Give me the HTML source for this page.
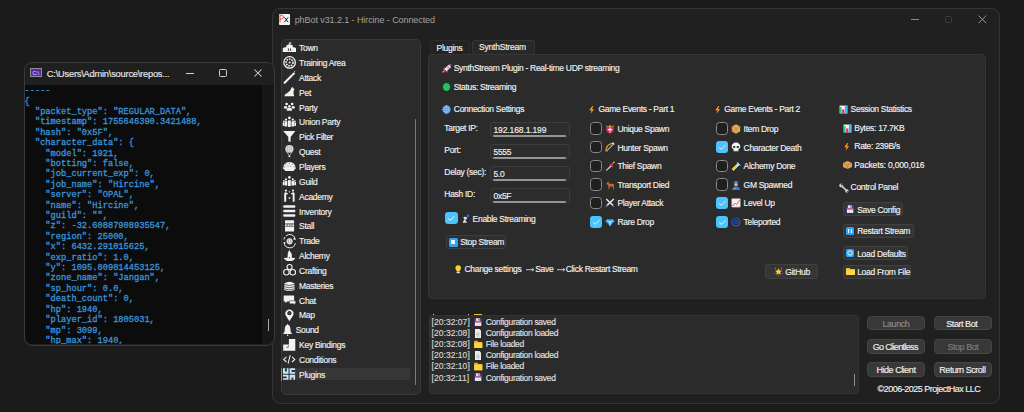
<!DOCTYPE html>
<html><head><meta charset="utf-8"><style>
*{margin:0;padding:0;box-sizing:border-box}
html,body{width:1024px;height:412px;overflow:hidden;background:#1b1b1b;font-family:"Liberation Sans",sans-serif;color:#e6e6e6}
.a{position:absolute}
.t{position:absolute;white-space:pre;color:#f2f2f2;-webkit-text-stroke:0.15px currentColor}
pre{font-family:"Liberation Mono",monospace}
</style></head><body>
<div class="a" style="left:272px;top:8px;width:728px;height:395.5px;background:#202020;border:1px solid #353535;border-radius:8px"></div>
<div class="a" style="left:279px;top:14px;width:11px;height:11px;background:#f4f4f4;border-radius:1px"></div>
<svg class="a" style="left:279px;top:14px" width="11" height="11" viewBox="0 0 11 11"><path d="M1 8.5V1.2H2.6Q4.4 1.2 4.4 3.1Q4.4 5 2.6 5H1" fill="none" stroke="#e8403a" stroke-width="0.9"/><path d="M5.4 3.3L9.2 8.2M9.2 3.3L5.4 8.2" stroke="#1a1a1a" stroke-width="1"/></svg>
<div class="t" style="left:294.70px;top:14.18px;font-size:9px;letter-spacing:-0.08px;line-height:12px;color:#a2a2a2;-webkit-text-stroke:0">phBot v31.2.1 - Hircine - Connected</div>
<div class="a" style="left:910.7px;top:18.6px;width:8.4px;height:1px;background:#8c8c8c"></div>
<div class="a" style="left:944.6px;top:15.7px;width:7.5px;height:7px;border:1px solid #3c3c3c;border-radius:1.5px"></div>
<svg class="a" style="left:978px;top:15px" width="9" height="9" viewBox="0 0 9 9"><path d="M0.6 0.6L8.2 8.2M8.2 0.6L0.6 8.2" stroke="#a6a6a6" stroke-width="0.9"/></svg>
<div class="a" style="left:280.5px;top:39px;width:140.5px;height:356px;background:#2b2b2b;border:1px solid #393939;border-radius:5px"></div>
<div class="a" style="left:415px;top:119px;width:1px;height:266px;background:#7c7c7c;border-radius:1px"></div>
<div class="a" style="left:282px;top:368.2px;width:128px;height:11.8px;background:#373737;border-radius:3px"></div>
<div class="a" style="left:281.2px;top:368px;width:1.2px;height:12.7px;background:#3d9be0"></div>
<svg class="a" style="left:0;top:0" width="1024" height="412" viewBox="0 0 1024 412">
<path d="M282.8 52V48.3L284.6 47.3H286.3V45.6L289.5 43.9L292.8 45.6V47.3H294.4L296 48.3V52Z" fill="#f2f2f2"/>
<path d="M289.3 44.3V42.5L291.3 43.1L289.3 43.7" fill="#f2f2f2" stroke="#f2f2f2" stroke-width="0.5"/>
<path d="M288.4 48.3V51M290.6 48.3V51" stroke="#2b2b2b" stroke-width="0.9"/>
<circle cx="289.6" cy="62.45" r="5.75" fill="none" stroke="#f2f2f2" stroke-width="1.3"/>
<circle cx="289.6" cy="62.45" r="3.4" fill="none" stroke="#f2f2f2" stroke-width="1.6" stroke-dasharray="1.6 0.9"/>
<circle cx="289.6" cy="62.45" r="1" fill="#f2f2f2"/>
<path d="M284.6 82.8L293.9 73.5" stroke="#f2f2f2" stroke-width="2" stroke-linecap="round"/>
<circle cx="294.6" cy="71.7" r="0.6" fill="#bbb"/>
<circle cx="292.2" cy="75.3" r="0.45" fill="#2b2b2b"/>
<path d="M284.3 96.3L285.2 94.3L287.6 92.8L290.2 90.4L291.4 87.8L292.6 86.9L293.3 88.2L294.5 89.2L293.8 90.4L293.4 93L294.2 96.3Z" fill="#f2f2f2"/>
<circle cx="286.6" cy="104" r="1.35" fill="#f2f2f2"/><circle cx="292.1" cy="104" r="1.35" fill="#f2f2f2"/>
<ellipse cx="285.6" cy="107.4" rx="1.7" ry="1.4" fill="#f2f2f2"/><ellipse cx="293.2" cy="107.4" rx="1.7" ry="1.4" fill="#f2f2f2"/>
<circle cx="289.35" cy="106.3" r="1.2" fill="#f2f2f2"/>
<path d="M286.6 110.8Q286.8 107.6 289.35 107.6Q291.9 107.6 292.1 110.8Z" fill="#f2f2f2"/>
<circle cx="289.4" cy="117.9" r="1.35" fill="#f2f2f2"/>
<circle cx="286" cy="119.7" r="1.1" fill="#f2f2f2"/><circle cx="292.8" cy="119.7" r="1.1" fill="#f2f2f2"/>
<circle cx="283.9" cy="121.3" r="0.9" fill="#f2f2f2"/><circle cx="294.9" cy="121.3" r="0.9" fill="#f2f2f2"/>
<path d="M288 127V120.4H290.8V127ZM284.8 126.5V121.2H287.3V126.5ZM291.5 126.5V121.2H294V126.5ZM282.8 126V122.5H284.5V126ZM294.3 126V122.5H296V126Z" fill="#f2f2f2"/>
<path d="M283.2 131.1H295.3L290.7 137.1L290.5 142L288.3 141.2V137.1Z" fill="#f2f2f2"/>
<ellipse cx="289.4" cy="148.9" rx="4.1" ry="3.8" fill="#dcdcdc"/>
<path d="M289.4 145.2V152.5M287.6 145.6Q286.8 149 287.7 152.3M291.2 145.6Q292 149 291.1 152.3" stroke="#9a9a9a" stroke-width="0.5" fill="none"/>
<path d="M286.6 151.7L289 155.3M292.2 151.7L289.8 155.3" stroke="#f2f2f2" stroke-width="0.6"/>
<circle cx="289.4" cy="156.3" r="1" fill="#f2f2f2"/>
<path d="M283.2 168.3Q283.2 162 289.4 161.9Q295.6 162 295.6 168.3L293.5 170.9H285.3Z" fill="#f2f2f2"/>
<path d="M286 164.2h.01M289.4 163.4h.01M292.8 164.2h.01M284.8 166.8h.01M288 166.2h.01M290.8 166.2h.01M294 166.8h.01" stroke="#2b2b2b" stroke-width="0.8" stroke-linecap="round"/>
<circle cx="289.4" cy="177.4" r="1.3" fill="#f2f2f2"/>
<circle cx="286" cy="179.2" r="1.05" fill="#f2f2f2"/><circle cx="292.8" cy="179.2" r="1.05" fill="#f2f2f2"/>
<circle cx="283.9" cy="180.8" r="0.85" fill="#f2f2f2"/><circle cx="294.9" cy="180.8" r="0.85" fill="#f2f2f2"/>
<path d="M288 186V179.9H290.8V186ZM284.8 185.6V180.7H287.3V185.6ZM291.5 185.6V180.7H294V185.6ZM282.8 185.2V182H284.5V185.2ZM294.3 185.2V182H296V185.2Z" fill="#f2f2f2"/>
<circle cx="285.9" cy="190.6" r="1.1" fill="#f2f2f2"/><circle cx="293" cy="190.6" r="1.1" fill="#f2f2f2"/>
<path d="M284.2 201.8V193.4Q284.4 192.2 285.9 192.2L288 193.5L287.6 194.5L286.2 194.3V201.8Z" fill="#f2f2f2"/>
<path d="M294.6 201.8V193.4Q294.4 192.2 293 192.2L290.9 193.5L291.3 194.5L292.7 194.3V201.8Z" fill="#f2f2f2"/>
<path d="M288.3 191.8L289.5 191.2L290.6 191.9L289.4 192.6Z M288 197.4H290.9L289.45 199.3Z" fill="#f2f2f2"/>
<path d="M284.4 206.4H294.2M284.4 211.1H294.2M284.4 215.5H294.2" stroke="#f2f2f2" stroke-width="2.5" stroke-linecap="round"/>
<path d="M285 223.6V221Q285 220.2 285.8 220.2H293.3Q294.1 220.2 294.1 221V223.6Z" fill="#f2f2f2"/>
<path d="M285 224.4H294.1V226.4H285Z" fill="#f2f2f2"/>
<path d="M286.5 225.2H288M289 225.2H290.2M291.2 225.2H292.6" stroke="#2b2b2b" stroke-width="0.8"/>
<path d="M285 226.9H294.1V231.5H285Z" fill="#f2f2f2"/>
<path d="M285.9 235.9A5.6 5.6 0 0 1 295.3 239.5M295.3 243.2A5.6 5.6 0 0 1 284.2 242.5M284 239.5A5.6 5.6 0 0 1 285 237" fill="none" stroke="#f2f2f2" stroke-width="1"/>
<path d="M294.2 237.2L295.6 239.7L293.2 239.4ZM284.6 244.6L283.4 242.1L285.8 242.5Z" fill="#f2f2f2"/>
<ellipse cx="289.6" cy="241.3" rx="3" ry="3.1" fill="#e8e8e8"/>
<path d="M288.4 239.3V243.3M290.8 239.3V243.3" stroke="#888" stroke-width="0.7"/>
<path d="M289.7 249.6C288.5 251.5 287.5 253 287.7 255.5L287.5 257.8L283.8 258C285 260.5 287 261 289.6 261C292.2 261 294.2 260.5 295.3 258L291.7 257.8C292 255.5 291.9 253.5 290.7 252.3C290 251.6 289.6 250.8 289.7 249.6Z" fill="#f2f2f2"/>
<ellipse cx="289.4" cy="257.7" rx="0.5" ry="0.8" fill="#2b2b2b"/>
<circle cx="289.6" cy="267" r="2.55" fill="none" stroke="#f2f2f2" stroke-width="1.1"/>
<circle cx="286.4" cy="272.3" r="2.75" fill="none" stroke="#f2f2f2" stroke-width="1.1"/>
<circle cx="292.8" cy="272.3" r="2.75" fill="none" stroke="#f2f2f2" stroke-width="1.1"/>
<path d="M284.5 283.2Q289.4 280.2 294.3 283.2L294.6 290Q289.4 292 284.2 290Z" fill="#f2f2f2"/>
<path d="M284.4 284.4Q289.4 286.6 294.4 284.4M284.4 286.7Q289.4 288.9 294.4 286.7M284.4 288.9Q289.4 291 294.4 288.9" fill="none" stroke="#2b2b2b" stroke-width="0.7"/>
<path d="M283.7 295.5H294.1V301.5H287.4L285.2 303.2L285.6 301.5H283.7Z" fill="#f2f2f2"/>
<path d="M289.4 300.8H295.7V303.8H294.6L294.8 305L293.3 303.8H289.4Z" fill="#f2f2f2" stroke="#2b2b2b" stroke-width="0.5"/>
<path d="M289.4 321.2L285.9 315.8A4.1 4.1 0 1 1 292.9 315.8Z" fill="#f2f2f2"/>
<circle cx="289.4" cy="313.2" r="2.1" fill="#2b2b2b"/>
<circle cx="289.4" cy="313.2" r="0.9" fill="#555"/>
<path d="M283.6 333.3Q284.8 332 284.8 329Q284.9 325 287.6 324.8Q290.3 325 290.4 329Q290.4 332 291.6 333.3Z" fill="#f2f2f2"/>
<path d="M283.4 333.5H291.9" stroke="#f2f2f2" stroke-width="1"/>
<circle cx="287.6" cy="335.2" r="0.75" fill="#f2f2f2"/>
<circle cx="287.6" cy="324.3" r="0.5" fill="#f2f2f2"/>
<path d="M288.9 338.9H295.3V350.7H283.2V344.5H288.9Z" fill="#f2f2f2"/>
<path d="M286.3 347.3H288.3V345.3" stroke="#2b2b2b" stroke-width="0.6" fill="none"/>
<path d="M286.5 356.8L283.7 359.4L286.5 362M292 356.8L294.8 359.4L292 362M290.2 355.2L288.1 363.6" fill="none" stroke="#f2f2f2" stroke-width="1.05"/>
</svg>
<svg class="a" style="left:0;top:0" width="1024" height="412" viewBox="0 0 1024 412"><path d="M283 368.2H288.5V373.7H283ZM289.6 368.2H295.1V373.7H289.6ZM283 374.8H288.5V379.8H283ZM289.6 374.8H295.1V379.8H289.6Z" fill="#c6e7fb"/><path d="M285 368.2H286.9V371.6H285ZM291.6 370.1H295.1V372H291.6ZM283 376.4H286.6V378.2H283ZM291.5 377.6H293.4V379.8H291.5Z" fill="#2a3440"/></svg>
<div class="t" style="left:299.10px;top:42.15px;font-size:8.5px;letter-spacing:-0.3px;line-height:12px">Town</div>
<div class="t" style="left:299.10px;top:57.00px;font-size:8.5px;letter-spacing:-0.3px;line-height:12px">Training Area</div>
<div class="t" style="left:299.10px;top:71.85px;font-size:8.5px;letter-spacing:-0.3px;line-height:12px">Attack</div>
<div class="t" style="left:299.10px;top:86.70px;font-size:8.5px;letter-spacing:-0.3px;line-height:12px">Pet</div>
<div class="t" style="left:299.10px;top:101.55px;font-size:8.5px;letter-spacing:-0.3px;line-height:12px">Party</div>
<div class="t" style="left:299.10px;top:116.40px;font-size:8.5px;letter-spacing:-0.3px;line-height:12px">Union Party</div>
<div class="t" style="left:299.10px;top:131.25px;font-size:8.5px;letter-spacing:-0.3px;line-height:12px">Pick Filter</div>
<div class="t" style="left:299.10px;top:146.10px;font-size:8.5px;letter-spacing:-0.3px;line-height:12px">Quest</div>
<div class="t" style="left:299.10px;top:160.95px;font-size:8.5px;letter-spacing:-0.3px;line-height:12px">Players</div>
<div class="t" style="left:299.10px;top:175.80px;font-size:8.5px;letter-spacing:-0.3px;line-height:12px">Guild</div>
<div class="t" style="left:299.10px;top:190.65px;font-size:8.5px;letter-spacing:-0.3px;line-height:12px">Academy</div>
<div class="t" style="left:299.10px;top:205.50px;font-size:8.5px;letter-spacing:-0.3px;line-height:12px">Inventory</div>
<div class="t" style="left:299.10px;top:220.35px;font-size:8.5px;letter-spacing:-0.3px;line-height:12px">Stall</div>
<div class="t" style="left:299.10px;top:235.20px;font-size:8.5px;letter-spacing:-0.3px;line-height:12px">Trade</div>
<div class="t" style="left:299.10px;top:250.05px;font-size:8.5px;letter-spacing:-0.3px;line-height:12px">Alchemy</div>
<div class="t" style="left:299.10px;top:264.90px;font-size:8.5px;letter-spacing:-0.3px;line-height:12px">Crafting</div>
<div class="t" style="left:299.10px;top:279.75px;font-size:8.5px;letter-spacing:-0.3px;line-height:12px">Masteries</div>
<div class="t" style="left:299.10px;top:294.60px;font-size:8.5px;letter-spacing:-0.3px;line-height:12px">Chat</div>
<div class="t" style="left:299.10px;top:309.45px;font-size:8.5px;letter-spacing:-0.3px;line-height:12px">Map</div>
<div class="t" style="left:295.70px;top:324.30px;font-size:8.5px;letter-spacing:-0.3px;line-height:12px">Sound</div>
<div class="t" style="left:299.10px;top:339.15px;font-size:8.5px;letter-spacing:-0.3px;line-height:12px">Key Bindings</div>
<div class="t" style="left:299.10px;top:354.00px;font-size:8.5px;letter-spacing:-0.3px;line-height:12px">Conditions</div>
<div class="t" style="left:299.10px;top:368.85px;font-size:8.5px;letter-spacing:-0.3px;line-height:12px">Plugins</div>
<div class="a" style="left:430px;top:40px;width:40px;height:14.5px;background:#222222;border:1px solid #2c2c2c;border-radius:3px"></div>
<div class="t" style="left:436.60px;top:41.65px;font-size:8.5px;letter-spacing:-0.3px;line-height:12px">Plugins</div>
<div class="a" style="left:472px;top:40px;width:62.5px;height:14.5px;background:#282828;border:1px solid #353535;border-radius:3px"></div>
<div class="t" style="left:479.00px;top:41.25px;font-size:8.5px;letter-spacing:-0.2px;line-height:12px">SynthStream</div>
<div class="a" style="left:428px;top:54px;width:557.5px;height:245px;background:#2b2b2b;border:1px solid #353535;border-radius:4px"></div>
<svg class="a" style="left:441.5px;top:63.5px" width="10" height="9" viewBox="0 0 10 9"><path d="M9.2 0.4L6.4 0.9L2 5.2L4.4 7.6L8.7 3.2Z" fill="#f2f2f6"/><path d="M9.2 0.4L6.6 0.8L8.8 3Z" fill="#e8306a"/><circle cx="6.1" cy="3.5" r="1" fill="#4a90e0"/><path d="M2 5.2L0.4 5.2L2 3.4L3.6 3.6ZM4.4 7.6L4.4 9L6.2 7.4L6 5.8Z" fill="#e8306a"/><path d="M2.4 6L3.6 7.2" stroke="#e8306a" stroke-width="1.6"/><path d="M0.5 8.5L2.2 6.8" stroke="#f0a030" stroke-width="1.4"/></svg>
<div class="t" style="left:453.70px;top:62.45px;font-size:8.5px;letter-spacing:-0.3px;line-height:12px">SynthStream Plugin - Real-time UDP streaming</div>
<div class="a" style="left:441.6px;top:82.4px;width:9.4px;height:9.4px;background:#21c45e;border:0.7px solid #1a2a20;border-radius:50%"></div>
<div class="t" style="left:453.70px;top:81.15px;font-size:8.5px;letter-spacing:-0.3px;line-height:12px">Status: Streaming</div>
<svg class="a" style="left:442px;top:105px" width="9" height="9" viewBox="0 0 9 9"><circle cx="4.5" cy="4.5" r="4.2" fill="#4d94d8"/><path d="M0.5 4.5h8M4.5 0.5v8M1.3 2.5h6.4M1.3 6.5h6.4" stroke="#9cc8f0" stroke-width="0.6"/><ellipse cx="4.5" cy="4.5" rx="2" ry="4" fill="none" stroke="#9cc8f0" stroke-width="0.6"/></svg>
<div class="t" style="left:453.80px;top:103.45px;font-size:8.5px;letter-spacing:-0.3px;line-height:12px">Connection Settings</div>
<div class="t" style="left:444.30px;top:121.65px;font-size:8.5px;letter-spacing:-0.3px;line-height:12px">Target IP:</div>
<div class="a" style="left:489.5px;top:121.5px;width:80.5px;height:15px;background:#2d2d2d;border:1px solid #3c3c3c;border-radius:3px"></div>
<div class="a" style="left:492.7px;top:135.3px;width:73.2px;height:1.3px;background:#959595;border-radius:1px"></div>
<div class="t" style="left:493.50px;top:123.85px;font-size:8.5px;letter-spacing:-0.12px;line-height:12px">192.168.1.199</div>
<div class="t" style="left:444.30px;top:143.65px;font-size:8.5px;letter-spacing:-0.3px;line-height:12px">Port:</div>
<div class="a" style="left:489.5px;top:143.5px;width:80.5px;height:15px;background:#2d2d2d;border:1px solid #3c3c3c;border-radius:3px"></div>
<div class="a" style="left:492.7px;top:157.3px;width:73.2px;height:1.3px;background:#959595;border-radius:1px"></div>
<div class="t" style="left:493.50px;top:145.85px;font-size:8.5px;letter-spacing:-0.3px;line-height:12px">5555</div>
<div class="t" style="left:444.30px;top:165.65px;font-size:8.5px;letter-spacing:-0.3px;line-height:12px">Delay (sec):</div>
<div class="a" style="left:489.5px;top:165.5px;width:80.5px;height:15px;background:#2d2d2d;border:1px solid #3c3c3c;border-radius:3px"></div>
<div class="a" style="left:492.7px;top:179.3px;width:73.2px;height:1.3px;background:#959595;border-radius:1px"></div>
<div class="t" style="left:493.50px;top:167.85px;font-size:8.5px;letter-spacing:-0.3px;line-height:12px">5.0</div>
<div class="t" style="left:444.30px;top:187.65px;font-size:8.5px;letter-spacing:-0.3px;line-height:12px">Hash ID:</div>
<div class="a" style="left:489.5px;top:187.5px;width:80.5px;height:15px;background:#2d2d2d;border:1px solid #3c3c3c;border-radius:3px"></div>
<div class="a" style="left:492.7px;top:201.3px;width:73.2px;height:1.3px;background:#959595;border-radius:1px"></div>
<div class="t" style="left:493.50px;top:189.85px;font-size:8.5px;letter-spacing:-0.3px;line-height:12px">0x5F</div>
<div class="a" style="left:445.3px;top:211.7px;width:12.5px;height:12.5px;background:#4cc2ff;border-radius:3px"></div>
<svg class="a" style="left:445.3px;top:211.7px" width="12.5" height="12.5" viewBox="0 0 12.5 12.5"><path d="M3.2 6.5L5.4 8.4L9.4 4.2" fill="none" stroke="#f0faff" stroke-width="1"/></svg>
<svg class="a" style="left:462.3px;top:214px" width="8" height="9.5" viewBox="0 0 8 9.5"><path d="M1.2 3.4Q3.6 1.8 5.4 4.2L3.2 6.2Z" fill="#e8e8e8"/><path d="M0.6 8.8L2.2 5.6L3.6 6.4L5.2 8.8Z" fill="#e0e0e0"/><circle cx="6.2" cy="1.8" r="1.3" fill="#2a70e0"/><path d="M3.6 4.6L5.6 2.6" stroke="#a0a0a0" stroke-width="0.5"/></svg>
<div class="t" style="left:472.60px;top:212.55px;font-size:8.5px;letter-spacing:-0.3px;line-height:12px">Enable Streaming</div>
<div class="a" style="left:446px;top:235px;width:60px;height:14px;background:#2f2f2f;border:1px solid #3e3e3e;border-radius:3px"></div>
<div class="a" style="left:449px;top:238px;width:8.5px;height:8.5px;background:#2fa4f0;border-radius:1.5px"></div>
<div class="a" style="left:451.2px;top:240.2px;width:4.1px;height:4.1px;background:#f0f8ff"></div>
<div class="t" style="left:460.20px;top:236.25px;font-size:8.5px;letter-spacing:-0.3px;line-height:12px">Stop Stream</div>
<svg class="a" style="left:588.5px;top:105.7px" width="6" height="8" viewBox="0 0 6 8"><path d="M3.3 0L0.2 4.3H2.5L1.5 7.7L5.2 3.2H3L4.3 0Z" fill="#f7952a"/></svg>
<div class="t" style="left:598.50px;top:103.45px;font-size:8.5px;letter-spacing:-0.3px;line-height:12px">Game Events - Part 1</div>
<svg class="a" style="left:714.8px;top:105.7px" width="6" height="8" viewBox="0 0 6 8"><path d="M3.3 0L0.2 4.3H2.5L1.5 7.7L5.2 3.2H3L4.3 0Z" fill="#f7952a"/></svg>
<div class="t" style="left:724.30px;top:103.45px;font-size:8.5px;letter-spacing:-0.3px;line-height:12px">Game Events - Part 2</div>
<div class="a" style="left:589.8px;top:122.3px;width:12.5px;height:12.5px;background:#1f1f1f;border:1px solid #8a8a8a;border-radius:3.5px"></div>
<svg class="a" style="left:605.4px;top:123.8px" width="10" height="10" viewBox="0 0 10 10"><path d="M1.3 2.6H8.7V6C8.7 8 6.8 9.3 5 9.6C3.2 9.3 1.3 8 1.3 6Z" fill="#d8284e"/><path d="M1.5 1.2L3 2.4L5 1L7 2.4L8.5 1.2V2.8H1.5Z" fill="#f0b030"/><path d="M5 3.5V8.6M2.8 5.6H7.2" stroke="#ffffff" stroke-width="1.2"/><path d="M2 7.2L8 7.2" stroke="#6a3a9a" stroke-width="0.3"/></svg>
<div class="t" style="left:617.40px;top:123.25px;font-size:8.5px;letter-spacing:-0.3px;line-height:12px">Unique Spawn</div>
<div class="a" style="left:589.8px;top:140.94px;width:12.5px;height:12.5px;background:#1f1f1f;border:1px solid #8a8a8a;border-radius:3.5px"></div>
<svg class="a" style="left:605.4px;top:142.44px" width="10" height="10" viewBox="0 0 10 10"><path d="M1.2 8.6Q0.8 2.2 8.6 1.2" fill="none" stroke="#e8a820" stroke-width="1.2"/><path d="M1.2 8.6L8.6 1.2" stroke="#f4f4f4" stroke-width="0.5"/><path d="M1 1.6L8.8 8.8" stroke="#202020" stroke-width="0.5"/><path d="M2.2 8.8L8.8 2.2" stroke="#d8c8a0" stroke-width="0.8"/><path d="M6.8 0.8L9.2 0.8L9.2 3.2Z" fill="#f0f0f0"/><path d="M0.6 7.2L0.6 9.4L2.8 9.4" stroke="#c080f0" stroke-width="0.6" fill="none"/></svg>
<div class="t" style="left:617.40px;top:141.70px;font-size:8.5px;letter-spacing:-0.3px;line-height:12px">Hunter Spawn</div>
<div class="a" style="left:589.8px;top:159.58px;width:12.5px;height:12.5px;background:#1f1f1f;border:1px solid #8a8a8a;border-radius:3.5px"></div>
<svg class="a" style="left:605.4px;top:161.07999999999998px" width="10" height="10" viewBox="0 0 10 10"><path d="M0.8 9.2L6 4L7 5L1.8 9.8Z" fill="#d8dce0"/><path d="M5 3.2L7.8 6" stroke="#e83a70" stroke-width="1.4"/><path d="M6.8 3.6L8.8 1.4" stroke="#c08020" stroke-width="1.3"/><circle cx="9" cy="1.2" r="0.8" fill="#f0c040"/></svg>
<div class="t" style="left:617.40px;top:160.15px;font-size:8.5px;letter-spacing:-0.3px;line-height:12px">Thief Spawn</div>
<div class="a" style="left:589.8px;top:178.22000000000003px;width:12.5px;height:12.5px;background:#1f1f1f;border:1px solid #8a8a8a;border-radius:3.5px"></div>
<svg class="a" style="left:605.4px;top:179.72px" width="10" height="10" viewBox="0 0 10 10"><path d="M1.5 3.5L3.2 1.4L4.2 2.3L3.6 3.4L8 3.8L9 5L8.7 9.2H8L7.6 6.5L4.8 6.5L4.2 9.2H3.5L3.4 6L2.8 4.4L1.8 4.6Z" fill="#b8703a"/><path d="M3.2 1.4L5.2 2.8L8 3.6" fill="none" stroke="#3a2010" stroke-width="0.6"/></svg>
<div class="t" style="left:617.40px;top:178.60px;font-size:8.5px;letter-spacing:-0.3px;line-height:12px">Transport Died</div>
<div class="a" style="left:589.8px;top:196.86px;width:12.5px;height:12.5px;background:#1f1f1f;border:1px solid #8a8a8a;border-radius:3.5px"></div>
<svg class="a" style="left:605.4px;top:198.36px" width="10" height="10" viewBox="0 0 10 10"><path d="M1.2 1L8.2 7.6M8.8 1L1.8 7.6" stroke="#e4e4ea" stroke-width="1.5"/><path d="M0.8 9L2.4 7.4M9.2 9L7.6 7.4" stroke="#8050b0" stroke-width="1.2"/></svg>
<div class="t" style="left:617.40px;top:197.05px;font-size:8.5px;letter-spacing:-0.3px;line-height:12px">Player Attack</div>
<div class="a" style="left:589.8px;top:215.5px;width:12.5px;height:12.5px;background:#4cc2ff;border-radius:3px"></div>
<svg class="a" style="left:589.8px;top:215.5px" width="12.5" height="12.5" viewBox="0 0 12.5 12.5"><path d="M3.2 6.5L5.4 8.4L9.4 4.2" fill="none" stroke="#f0faff" stroke-width="1"/></svg>
<svg class="a" style="left:605.4px;top:217.0px" width="10" height="10" viewBox="0 0 10 10"><path d="M0.4 4.2L2.4 2.2H7.6L9.6 4.2L5 9Z" fill="#2a9af0"/><path d="M2.4 2.2L5 9L7.6 2.2M0.4 4.2H9.6" fill="none" stroke="#a8e0ff" stroke-width="0.5"/><path d="M4 4.3L5 8L6 4.3Z" fill="#e8f8ff"/></svg>
<div class="t" style="left:617.40px;top:215.50px;font-size:8.5px;letter-spacing:-0.3px;line-height:12px">Rare Drop</div>
<div class="a" style="left:715.8px;top:122.3px;width:12.5px;height:12.5px;background:#1f1f1f;border:1px solid #8a8a8a;border-radius:3.5px"></div>
<svg class="a" style="left:731.4px;top:123.8px" width="10" height="10" viewBox="0 0 10 10"><path d="M5 0.3L9.2 2.6V7.4L5 9.7L0.8 7.4V2.6Z" fill="#e0a858"/><path d="M0.8 2.6L5 4.9L9.2 2.6M5 4.9V9.7" stroke="#b87838" stroke-width="0.5" fill="none"/><path d="M0.8 5.5L2.2 6.6V8.2L0.8 7.4Z" fill="#f05030"/></svg>
<div class="t" style="left:743.60px;top:123.25px;font-size:8.5px;letter-spacing:-0.3px;line-height:12px">Item Drop</div>
<div class="a" style="left:715.8px;top:140.94px;width:12.5px;height:12.5px;background:#4cc2ff;border-radius:3px"></div>
<svg class="a" style="left:715.8px;top:140.94px" width="12.5" height="12.5" viewBox="0 0 12.5 12.5"><path d="M3.2 6.5L5.4 8.4L9.4 4.2" fill="none" stroke="#f0faff" stroke-width="1"/></svg>
<svg class="a" style="left:731.4px;top:142.44px" width="10" height="10" viewBox="0 0 10 10"><path d="M5 0.5C7.6 0.5 9.3 2.3 9.3 4.5C9.3 6 8.4 6.9 7.4 7.3V9.2H2.6V7.3C1.6 6.9 0.7 6 0.7 4.5C0.7 2.3 2.4 0.5 5 0.5Z" fill="#f4f4f4"/><ellipse cx="3.2" cy="5" rx="1.2" ry="1.1" fill="#1a1a1a"/><ellipse cx="6.8" cy="5" rx="1.2" ry="1.1" fill="#1a1a1a"/><path d="M4.2 8.2V9.2M5.8 8.2V9.2" stroke="#999" stroke-width="0.4"/></svg>
<div class="t" style="left:743.60px;top:141.70px;font-size:8.5px;letter-spacing:-0.3px;line-height:12px">Character Death</div>
<div class="a" style="left:715.8px;top:159.58px;width:12.5px;height:12.5px;background:#1f1f1f;border:1px solid #8a8a8a;border-radius:3.5px"></div>
<svg class="a" style="left:731.4px;top:161.07999999999998px" width="10" height="10" viewBox="0 0 10 10"><path d="M0.8 8L6.8 2L8.6 3.8L2.6 9.8Z" fill="#c8e4f4"/><path d="M0.8 8L4 4.8L5.8 6.6L2.6 9.8Z" fill="#e8d020"/><path d="M6 1.2L9.4 4.6" stroke="#d8eef8" stroke-width="1"/></svg>
<div class="t" style="left:743.60px;top:160.15px;font-size:8.5px;letter-spacing:-0.3px;line-height:12px">Alchemy Done</div>
<div class="a" style="left:715.8px;top:178.22000000000003px;width:12.5px;height:12.5px;background:#1f1f1f;border:1px solid #8a8a8a;border-radius:3.5px"></div>
<svg class="a" style="left:731.4px;top:179.72px" width="10" height="10" viewBox="0 0 10 10"><path d="M2.6 1.8Q5 0.2 7.4 1.8V3.2H2.6Z" fill="#2a70d0"/><rect x="4.4" y="1.3" width="1.2" height="0.9" fill="#f0c030"/><circle cx="5" cy="4.8" r="1.8" fill="#f0b880"/><path d="M1 10Q1 6.8 5 6.6Q9 6.8 9 10Z" fill="#2a80e0"/><circle cx="5" cy="5.2" r="0.5" fill="#e03030"/><rect x="3.4" y="8" width="1.2" height="1" fill="#f0c030"/></svg>
<div class="t" style="left:743.60px;top:178.60px;font-size:8.5px;letter-spacing:-0.3px;line-height:12px">GM Spawned</div>
<div class="a" style="left:715.8px;top:196.86px;width:12.5px;height:12.5px;background:#4cc2ff;border-radius:3px"></div>
<svg class="a" style="left:715.8px;top:196.86px" width="12.5" height="12.5" viewBox="0 0 12.5 12.5"><path d="M3.2 6.5L5.4 8.4L9.4 4.2" fill="none" stroke="#f0faff" stroke-width="1"/></svg>
<svg class="a" style="left:731.4px;top:198.36px" width="10" height="10" viewBox="0 0 10 10"><rect x="0.6" y="0.6" width="8.8" height="8.6" rx="0.8" fill="#f6f6f6" stroke="#8a8a8a" stroke-width="0.5"/><path d="M1.5 8L4 5.2L5.8 6.3L8.6 2.2" stroke="#e8304a" stroke-width="0.9" fill="none"/><path d="M1.5 3.5H8.6M1.5 5.5H8.6" stroke="#d8d8e0" stroke-width="0.3"/></svg>
<div class="t" style="left:743.60px;top:197.05px;font-size:8.5px;letter-spacing:-0.3px;line-height:12px">Level Up</div>
<div class="a" style="left:715.8px;top:215.5px;width:12.5px;height:12.5px;background:#4cc2ff;border-radius:3px"></div>
<svg class="a" style="left:715.8px;top:215.5px" width="12.5" height="12.5" viewBox="0 0 12.5 12.5"><path d="M3.2 6.5L5.4 8.4L9.4 4.2" fill="none" stroke="#f0faff" stroke-width="1"/></svg>
<svg class="a" style="left:731.4px;top:217.0px" width="10" height="10" viewBox="0 0 10 10"><circle cx="5" cy="5" r="3.9" fill="none" stroke="#1e58d8" stroke-width="1.3"/><circle cx="5" cy="5" r="1.6" fill="none" stroke="#1e58d8" stroke-width="0.9"/><path d="M1.2 3.2Q3 0.6 6 1.1" stroke="#2a2a2a" stroke-width="0.6" fill="none"/></svg>
<div class="t" style="left:743.60px;top:215.50px;font-size:8.5px;letter-spacing:-0.3px;line-height:12px">Teleported</div>
<svg class="a" style="left:838.8px;top:105px" width="9" height="9" viewBox="0 0 9 9"><rect x="0.3" y="0.3" width="8.4" height="8.4" rx="1" fill="#f4f0f4" stroke="#202020" stroke-width="0.5"/><rect x="1" y="2" width="1.6" height="6.4" fill="#20d070"/><rect x="3.2" y="4.5" width="2.2" height="3.9" fill="#f02070"/><rect x="5.9" y="0.7" width="2" height="7.7" fill="#30b8f0"/></svg>
<div class="t" style="left:850.60px;top:103.35px;font-size:8.5px;letter-spacing:-0.3px;line-height:12px">Session Statistics</div>
<svg class="a" style="left:842.8px;top:123.8px" width="9" height="9" viewBox="0 0 9 9"><rect x="0.3" y="0.3" width="8.4" height="8.4" rx="1" fill="#f4f0f4" stroke="#202020" stroke-width="0.5"/><rect x="1" y="2" width="1.6" height="6.4" fill="#20d070"/><rect x="3.2" y="4.5" width="2.2" height="3.9" fill="#f02070"/><rect x="5.9" y="0.7" width="2" height="7.7" fill="#30b8f0"/></svg>
<div class="t" style="left:854.30px;top:121.75px;font-size:8.5px;letter-spacing:-0.3px;line-height:12px">Bytes: 17.7KB</div>
<svg class="a" style="left:844px;top:142.7px" width="6" height="8" viewBox="0 0 6 8"><path d="M3.3 0L0.2 4.3H2.5L1.5 7.7L5.2 3.2H3L4.3 0Z" fill="#f7952a"/></svg>
<div class="t" style="left:854.30px;top:140.25px;font-size:8.5px;letter-spacing:-0.3px;line-height:12px">Rate: 239B/s</div>
<svg class="a" style="left:842.8px;top:161.2px" width="9" height="8" viewBox="0 0 9 8"><path d="M4.5 0L9 2v4L4.5 8L0 6V2z" fill="#e0a050"/><path d="M0 2L4.5 4L9 2M4.5 4v4" stroke="#b07030" stroke-width="0.6" fill="none"/></svg>
<div class="t" style="left:854.30px;top:158.65px;font-size:8.5px;letter-spacing:-0.15px;line-height:12px">Packets: 0,000,016</div>
<svg class="a" style="left:838.5px;top:182.5px" width="10" height="10" viewBox="0 0 10 10"><path d="M2.4 2.6L7.6 7.6" stroke="#d0d0d8" stroke-width="1.5"/><path d="M0.7 2.2A2 2 0 0 0 3.6 3.4L3 1.6L1.6 1.2A2 2 0 0 0 0.7 2.2Z" fill="#d0d0d8"/><circle cx="2.2" cy="2.4" r="1.9" fill="#d0d0d8"/><circle cx="2.9" cy="1.6" r="0.9" fill="#2b2b2b"/><circle cx="7.9" cy="8" r="1.7" fill="#d0d0d8"/><circle cx="8.8" cy="8.8" r="0.8" fill="#2b2b2b"/></svg>
<div class="t" style="left:850.60px;top:180.55px;font-size:8.5px;letter-spacing:-0.3px;line-height:12px">Control Panel</div>
<div class="a" style="left:843px;top:201.6px;width:59.5px;height:14.5px;background:#333333;border:1px solid #414141;border-radius:3px"></div>
<svg class="a" style="left:845.8px;top:204.5px" width="8.2" height="8.2" viewBox="0 0 8.2 8.2"><path d="M0.3 0.3H6.6L7.9 1.6V7.9H0.3Z" fill="#4b3d8f"/><rect x="2" y="0.3" width="3.8" height="2.6" fill="#e8e8f0"/><rect x="4.3" y="0.8" width="1" height="1.6" fill="#4b3d8f"/><rect x="1" y="3.6" width="6.2" height="4.3" fill="#f4f4f8"/><rect x="1" y="3.6" width="6.2" height="1" fill="#e0304a"/><path d="M2 5.9H6.2M2 6.9H6.2" stroke="#b8c8e0" stroke-width="0.4"/></svg>
<div class="t" style="left:857.20px;top:203.55px;font-size:8.5px;letter-spacing:-0.3px;line-height:12px">Save Config</div>
<div class="a" style="left:843px;top:223.8px;width:70.5px;height:14px;background:#333333;border:1px solid #414141;border-radius:3px"></div>
<div class="a" style="left:845.8px;top:226.5px;width:8px;height:8px;background:#2fa4f0;border-radius:1.5px"></div>
<svg class="a" style="left:845.8px;top:226.5px" width="8" height="8" viewBox="0 0 8 8"><path d="M2.5 2v4M5.5 2v4M2 3h1.5M4.5 5h1.5" stroke="#fff" stroke-width="0.9"/></svg>
<div class="t" style="left:857.20px;top:225.35px;font-size:8.5px;letter-spacing:-0.3px;line-height:12px">Restart Stream</div>
<div class="a" style="left:843px;top:246.3px;width:65px;height:14px;background:#333333;border:1px solid #414141;border-radius:3px"></div>
<div class="a" style="left:845.8px;top:249px;width:8px;height:8px;background:#2fa4f0;border-radius:1.5px"></div>
<svg class="a" style="left:845.8px;top:249px" width="8" height="8" viewBox="0 0 8 8"><circle cx="4" cy="4" r="2.2" fill="none" stroke="#fff" stroke-width="0.9"/></svg>
<div class="t" style="left:857.20px;top:247.65px;font-size:8.5px;letter-spacing:-0.3px;line-height:12px">Load Defaults</div>
<div class="a" style="left:843px;top:264.5px;width:67.5px;height:14.2px;background:#333333;border:1px solid #414141;border-radius:3px"></div>
<svg class="a" style="left:845.5px;top:267px" width="9" height="8" viewBox="0 0 9 8"><path d="M0 1h3.5l1 1H9v6H0z" fill="#f5c02a"/><path d="M0 3h9v5H0z" fill="#ffd24a"/></svg>
<div class="t" style="left:857.20px;top:266.45px;font-size:8.5px;letter-spacing:-0.3px;line-height:12px">Load From File</div>
<svg class="a" style="left:454.5px;top:264.5px" width="6.5" height="9" viewBox="0 0 6.5 9"><path d="M3.2 0.2C5 0.2 6 1.4 6 2.9C6 4.2 5 4.9 4.6 6.3H1.8C1.4 4.9 0.4 4.2 0.4 2.9C0.4 1.4 1.4 0.2 3.2 0.2Z" fill="#fccf2a"/><rect x="1.6" y="6.4" width="3.2" height="1.9" rx="0.6" fill="#e0e0e8"/></svg>
<div class="t" style="left:464.50px;top:263.25px;font-size:8.5px;letter-spacing:-0.3px;line-height:12px">Change settings</div>
<svg class="a" style="left:524.5px;top:265.8px" width="10" height="6" viewBox="0 0 10 6"><path d="M1 3.7H8.5" stroke="#eeeeee" stroke-width="0.8"/><path d="M6.9 2.2L8.9 3.7L6.9 5.2" fill="none" stroke="#eeeeee" stroke-width="0.75"/></svg>
<div class="t" style="left:535.20px;top:263.25px;font-size:8.5px;letter-spacing:-0.3px;line-height:12px">Save</div>
<svg class="a" style="left:555.5px;top:265.8px" width="10" height="6" viewBox="0 0 10 6"><path d="M1 3.7H8.5" stroke="#eeeeee" stroke-width="0.8"/><path d="M6.9 2.2L8.9 3.7L6.9 5.2" fill="none" stroke="#eeeeee" stroke-width="0.75"/></svg>
<div class="t" style="left:565.70px;top:263.25px;font-size:8.5px;letter-spacing:-0.3px;line-height:12px">Click Restart Stream</div>
<div class="a" style="left:765.2px;top:264.1px;width:52.5px;height:14.6px;background:#353535;border:1px solid #404040;border-radius:3px"></div>
<svg class="a" style="left:773.8px;top:267px" width="9" height="9" viewBox="0 0 9 9"><path d="M4.5 1.2L5.6 3.4L8 3.7L6.2 5.3L6.7 7.7L4.5 6.5L2.3 7.7L2.8 5.3L1 3.7L3.4 3.4Z" fill="#fad232"/><circle cx="1.6" cy="1.4" r="0.6" fill="#d8902a"/><circle cx="7.4" cy="1.4" r="0.6" fill="#d8902a"/><circle cx="0.8" cy="6.2" r="0.5" fill="#d8902a"/><circle cx="8.2" cy="6.2" r="0.5" fill="#d8902a"/><circle cx="4.5" cy="8.6" r="0.5" fill="#d8902a"/></svg>
<div class="t" style="left:785.20px;top:266.05px;font-size:8.5px;letter-spacing:-0.3px;line-height:12px">GitHub</div>
<div class="a" style="left:429px;top:314.5px;width:430px;height:79.5px;background:#2b2b2b;border:1px solid #333;border-radius:3px"></div>
<div class="a" style="left:853.5px;top:373.5px;width:1.5px;height:12px;background:#909090"></div>
<div class="a" style="left:432.5px;top:314.2px;width:1.6px;height:1px;background:#c8c8c8"></div>
<div class="a" style="left:467.5px;top:314.2px;width:1.6px;height:1px;background:#c8c8c8"></div>
<div class="a" style="left:474.3px;top:314.2px;width:8px;height:1.2px;background:#f5c02a"></div>
<div class="t" style="left:431.50px;top:315.75px;font-size:8.5px;letter-spacing:0.05px;line-height:12px;color:#d6d6d6">[20:32:07]</div>
<svg class="a" style="left:474.2px;top:317.5px" width="8.2" height="8.2" viewBox="0 0 8.2 8.2"><path d="M0.3 0.3H6.6L7.9 1.6V7.9H0.3Z" fill="#4b3d8f"/><rect x="2" y="0.3" width="3.8" height="2.6" fill="#e8e8f0"/><rect x="4.3" y="0.8" width="1" height="1.6" fill="#4b3d8f"/><rect x="1" y="3.6" width="6.2" height="4.3" fill="#f4f4f8"/><rect x="1" y="3.6" width="6.2" height="1" fill="#e0304a"/><path d="M2 5.9H6.2M2 6.9H6.2" stroke="#b8c8e0" stroke-width="0.4"/></svg>
<div class="t" style="left:485.70px;top:315.75px;font-size:8.5px;letter-spacing:-0.3px;line-height:12px;color:#e0e0e0">Configuration saved</div>
<div class="t" style="left:431.50px;top:326.91px;font-size:8.5px;letter-spacing:0.05px;line-height:12px;color:#d6d6d6">[20:32:08]</div>
<svg class="a" style="left:474.2px;top:328.66px" width="8" height="9" viewBox="0 0 8 9"><path d="M1 0h4.5L7 1.5V9H1z" fill="#ececec"/><path d="M2.5 4h3M2.5 5.5h3M2.5 7h3" stroke="#a0a0a0" stroke-width="0.6"/></svg>
<div class="t" style="left:485.70px;top:326.91px;font-size:8.5px;letter-spacing:-0.3px;line-height:12px;color:#e0e0e0">Configuration loaded</div>
<div class="t" style="left:431.50px;top:338.07px;font-size:8.5px;letter-spacing:0.05px;line-height:12px;color:#d6d6d6">[20:32:08]</div>
<svg class="a" style="left:474.2px;top:339.82px" width="8.5" height="8.5" viewBox="0 0 8.5 8.5"><path d="M0.2 0.8h3.2l1 1.2H8.3v6.3H0.2z" fill="#f0b820"/><path d="M0.2 2.8h8.1v5.5H0.2z" fill="#ffd040"/></svg>
<div class="t" style="left:485.70px;top:338.07px;font-size:8.5px;letter-spacing:-0.3px;line-height:12px;color:#e0e0e0">File loaded</div>
<div class="t" style="left:431.50px;top:349.23px;font-size:8.5px;letter-spacing:0.05px;line-height:12px;color:#d6d6d6">[20:32:10]</div>
<svg class="a" style="left:474.2px;top:350.98px" width="8" height="9" viewBox="0 0 8 9"><path d="M1 0h4.5L7 1.5V9H1z" fill="#ececec"/><path d="M2.5 4h3M2.5 5.5h3M2.5 7h3" stroke="#a0a0a0" stroke-width="0.6"/></svg>
<div class="t" style="left:485.70px;top:349.23px;font-size:8.5px;letter-spacing:-0.3px;line-height:12px;color:#e0e0e0">Configuration loaded</div>
<div class="t" style="left:431.50px;top:360.39px;font-size:8.5px;letter-spacing:0.05px;line-height:12px;color:#d6d6d6">[20:32:10]</div>
<svg class="a" style="left:474.2px;top:362.14px" width="8.5" height="8.5" viewBox="0 0 8.5 8.5"><path d="M0.2 0.8h3.2l1 1.2H8.3v6.3H0.2z" fill="#f0b820"/><path d="M0.2 2.8h8.1v5.5H0.2z" fill="#ffd040"/></svg>
<div class="t" style="left:485.70px;top:360.39px;font-size:8.5px;letter-spacing:-0.3px;line-height:12px;color:#e0e0e0">File loaded</div>
<div class="t" style="left:431.50px;top:371.55px;font-size:8.5px;letter-spacing:0.05px;line-height:12px;color:#d6d6d6">[20:32:11]</div>
<svg class="a" style="left:474.2px;top:373.3px" width="8.2" height="8.2" viewBox="0 0 8.2 8.2"><path d="M0.3 0.3H6.6L7.9 1.6V7.9H0.3Z" fill="#4b3d8f"/><rect x="2" y="0.3" width="3.8" height="2.6" fill="#e8e8f0"/><rect x="4.3" y="0.8" width="1" height="1.6" fill="#4b3d8f"/><rect x="1" y="3.6" width="6.2" height="4.3" fill="#f4f4f8"/><rect x="1" y="3.6" width="6.2" height="1" fill="#e0304a"/><path d="M2 5.9H6.2M2 6.9H6.2" stroke="#b8c8e0" stroke-width="0.4"/></svg>
<div class="t" style="left:485.70px;top:371.55px;font-size:8.5px;letter-spacing:-0.3px;line-height:12px;color:#e0e0e0">Configuration saved</div>
<div class="a" style="left:867px;top:315.8px;width:58px;height:14.6px;background:#383838;border:1px solid #454545;border-radius:4px"></div>
<div class="t" style="left:882.50px;top:318.08px;font-size:9px;letter-spacing:-0.45px;line-height:12px;color:#8c8c8c">Launch</div>
<div class="a" style="left:934px;top:315.8px;width:58px;height:14.6px;background:#383838;border:1px solid #454545;border-radius:4px"></div>
<div class="t" style="left:946.30px;top:318.08px;font-size:9px;letter-spacing:-0.45px;line-height:12px;color:#f0f0f0">Start Bot</div>
<div class="a" style="left:867px;top:339.2px;width:58px;height:14.6px;background:#383838;border:1px solid #454545;border-radius:4px"></div>
<div class="t" style="left:872.70px;top:341.08px;font-size:9px;letter-spacing:-0.65px;line-height:12px;color:#f0f0f0">Go Clientless</div>
<div class="a" style="left:934px;top:339.2px;width:58px;height:14.6px;background:#383838;border:1px solid #454545;border-radius:4px"></div>
<div class="t" style="left:947.40px;top:341.08px;font-size:9px;letter-spacing:-0.45px;line-height:12px;color:#7c7c7c">Stop Bot</div>
<div class="a" style="left:867px;top:362.3px;width:58px;height:14.6px;background:#383838;border:1px solid #454545;border-radius:4px"></div>
<div class="t" style="left:876.40px;top:363.88px;font-size:9px;letter-spacing:-0.45px;line-height:12px;color:#f0f0f0">Hide Client</div>
<div class="a" style="left:934px;top:362.3px;width:58px;height:14.6px;background:#383838;border:1px solid #454545;border-radius:4px"></div>
<div class="t" style="left:939.30px;top:363.88px;font-size:9px;letter-spacing:-0.45px;line-height:12px;color:#f0f0f0">Return Scroll</div>
<div class="t" style="left:877.50px;top:382.78px;font-size:9px;letter-spacing:-0.5px;line-height:12px;color:#f0f0f0">©2006-2025 ProjectHax LLC</div>
<div class="a" style="left:24px;top:62px;width:251px;height:283.5px;background:#1f1f1f;border:1px solid #3a3a3a;border-radius:8px"></div>
<div class="a" style="left:25px;top:85px;width:237px;height:259px;background:#0c0c0c;border-bottom-left-radius:7px"></div>
<div class="a" style="left:262px;top:85px;width:12px;height:259px;background:#171717;border-bottom-right-radius:7px"></div>
<div class="a" style="left:268.3px;top:318.7px;width:1.2px;height:12.2px;background:#a8a8a8"></div>
<div class="a" style="left:30.2px;top:68.1px;width:12px;height:8.8px;background:#5a2a9a;border:1px solid #8c8c9c"></div>
<div class="t" style="left:32.20px;top:67.32px;font-size:6px;letter-spacing:-0.3px;line-height:12px;color:#dcd8f0;-webkit-text-stroke:0">C:\</div>
<div class="t" style="left:46.80px;top:67.58px;font-size:9.3px;letter-spacing:-0.22px;line-height:12px;color:#e8e8e8">C:\Users\Admin\source\repos...</div>
<div class="a" style="left:186px;top:72.5px;width:8px;height:1.2px;background:#d0d0d0"></div>
<div class="a" style="left:219px;top:69px;width:8px;height:7.5px;border:1.1px solid #d0d0d0;border-radius:1.5px"></div>
<svg class="a" style="left:253.5px;top:69px" width="8" height="8" viewBox="0 0 8 8"><path d="M0.5 0.5L7.5 7.5M7.5 0.5L0.5 7.5" stroke="#d8d8d8" stroke-width="1.05"/></svg>
<div class="a" style="left:25px;top:85px;width:237px;height:258.5px;overflow:hidden;border-bottom-left-radius:7px"><pre style="position:absolute;left:-0.5px;top:1.18px;font-size:8.7px;line-height:10.4px;color:#3a94da;-webkit-text-stroke:0.3px currentColor">-----
{
  "packet_type": "REGULAR_DATA",
  "timestamp": 1755646390.3421488,
  "hash": "0x5F",
  "character_data": {
    "model": 1921,
    "botting": false,
    "job_current_exp": 0,
    "job_name": "Hircine",
    "server": "OPAL",
    "name": "Hircine",
    "guild": "",
    "z": -32.60887908935547,
    "region": 25000,
    "x": 6432.291015625,
    "exp_ratio": 1.0,
    "y": 1095.809814453125,
    "zone_name": "Jangan",
    "sp_hour": 0.0,
    "death_count": 0,
    "hp": 1940,
    "player_id": 1805031,
    "mp": 3099,
    "hp_max": 1940,</pre></div>
</body></html>
